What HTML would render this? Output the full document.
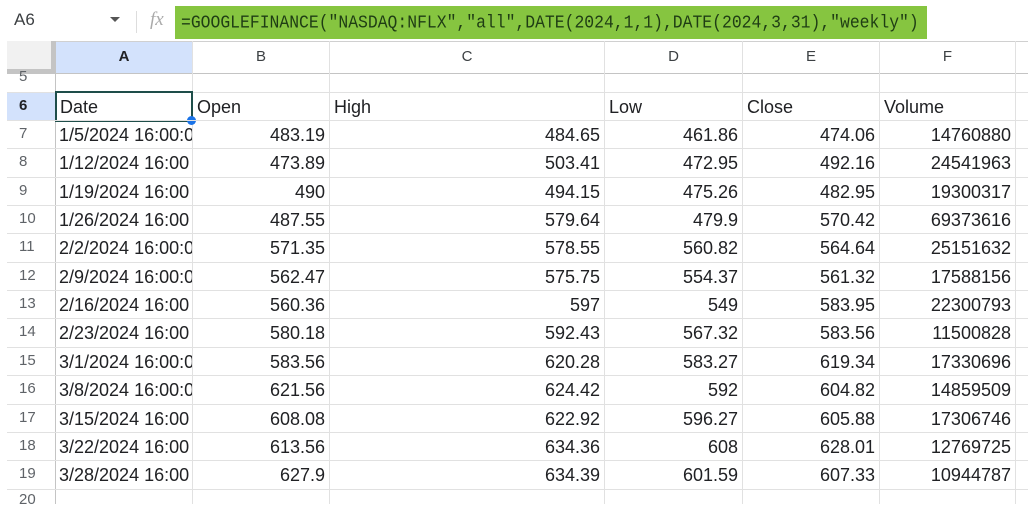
<!DOCTYPE html>
<html><head><meta charset="utf-8"><style>
body{margin:0;width:1028px;height:504px;overflow:hidden;background:#fff;font-family:"Liberation Sans",Arial,sans-serif;position:relative}
.a{position:absolute}
.hl{position:absolute;height:1px;background:#e1e1e1}
.vl{position:absolute;width:1px;background:#e1e1e1}
.c{position:absolute;font-size:18px;color:#202124;white-space:nowrap;overflow:hidden;line-height:28px}
.r{text-align:right}
.rh{position:absolute;left:7px;width:48px;font-size:15px;color:#5f6368;line-height:28px;padding-left:12px;box-sizing:border-box}
.ch{position:absolute;top:41px;height:32px;line-height:32px;text-align:center;font-size:15px;color:#3c4043}
</style></head><body>
<div class="a" style="left:14px;top:10px;font-size:17px;color:#3c4043">A6</div>
<div class="a" style="left:110px;top:17px;width:0;height:0;border-left:5px solid transparent;border-right:5px solid transparent;border-top:5px solid #555"></div>
<div class="a" style="left:136px;top:11px;width:1px;height:22px;background:#ddd"></div>
<div class="a" style="left:150px;top:9px;font-family:'Liberation Serif',serif;font-style:italic;font-size:19px;color:#aaa">fx</div>
<div class="a" style="left:175px;top:6px;width:752px;height:33px;background:#86c540"></div>
<div class="a" style="left:181px;top:6px;line-height:33px;font-family:'Liberation Mono',monospace;font-size:16.4px;color:#1f3d14;transform:scaleY(1.12);transform-origin:0 50%">=GOOGLEFINANCE("NASDAQ:NFLX","all",DATE(2024,1,1),DATE(2024,3,31),"weekly")</div>
<div class="a" style="left:7px;top:41px;width:1021px;height:1px;background:#d0d0d0"></div>
<div class="a" style="left:7px;top:41px;width:48px;height:32px;background:#f1f1f1;border-right:4px solid #c4c4c4;border-bottom:4px solid #c4c4c4;box-sizing:border-box"></div>
<div class="a" style="left:56px;top:42px;width:136px;height:31px;background:#d3e2fc"></div>
<div class="ch" style="left:56px;width:136px;font-weight:bold;color:#202124">A</div>
<div class="ch" style="left:193px;width:136px">B</div>
<div class="ch" style="left:330px;width:274px">C</div>
<div class="ch" style="left:605px;width:137px">D</div>
<div class="ch" style="left:743px;width:136px">E</div>
<div class="ch" style="left:880px;width:135px">F</div>
<div class="a" style="left:7px;top:73px;width:1021px;height:1px;background:#c4c4c4"></div>
<div class="a" style="left:7px;top:92px;width:48px;height:28px;background:#d3e2fc"></div>
<div class="vl" style="left:55px;top:41px;height:463px;background:#c4c4c4"></div>
<div class="vl" style="left:192px;top:41px;height:463px"></div>
<div class="vl" style="left:329px;top:41px;height:463px"></div>
<div class="vl" style="left:604px;top:41px;height:463px"></div>
<div class="vl" style="left:742px;top:41px;height:463px"></div>
<div class="vl" style="left:879px;top:41px;height:463px"></div>
<div class="vl" style="left:1015px;top:41px;height:463px"></div>
<div class="rh" style="top:70px;line-height:14px;height:16px;overflow:hidden">5</div>
<div class="hl" style="left:7px;top:92px;width:1021px"></div>
<div class="rh" style="top:92px;font-weight:bold;color:#202124">6</div>
<div class="c" style="left:60px;top:93px">Date</div>
<div class="c" style="left:197px;top:93px">Open</div>
<div class="c" style="left:334px;top:93px">High</div>
<div class="c" style="left:609px;top:93px">Low</div>
<div class="c" style="left:747px;top:93px">Close</div>
<div class="c" style="left:884px;top:93px">Volume</div>
<div class="a" style="left:55px;top:91px;width:134px;height:27px;border:2px solid #1e4e4a"></div>
<div class="a" style="left:187px;top:116px;width:9px;height:9px;border-radius:50%;background:#1a73e8"></div>
<div id="rows"></div>
<script>
var d=[["1/5/2024 16:00:00","483.19","484.65","461.86","474.06","14760880"],
["1/12/2024 16:00","473.89","503.41","472.95","492.16","24541963"],
["1/19/2024 16:00","490","494.15","475.26","482.95","19300317"],
["1/26/2024 16:00","487.55","579.64","479.9","570.42","69373616"],
["2/2/2024 16:00:00","571.35","578.55","560.82","564.64","25151632"],
["2/9/2024 16:00:00","562.47","575.75","554.37","561.32","17588156"],
["2/16/2024 16:00","560.36","597","549","583.95","22300793"],
["2/23/2024 16:00","580.18","592.43","567.32","583.56","11500828"],
["3/1/2024 16:00:00","583.56","620.28","583.27","619.34","17330696"],
["3/8/2024 16:00:00","621.56","624.42","592","604.82","14859509"],
["3/15/2024 16:00","608.08","622.92","596.27","605.88","17306746"],
["3/22/2024 16:00","613.56","634.36","608","628.01","12769725"],
["3/28/2024 16:00","627.9","634.39","601.59","607.33","10944787"]];
var cols=[[192,329],[329,604],[604,742],[742,879],[879,1015]];
var h="";
for(var i=0;i<d.length;i++){var t=Math.round(120+i*28.35);
h+='<div class="hl" style="left:7px;top:'+t+'px;width:1021px"></div>';
h+='<div class="rh" style="top:'+t+'px">'+(7+i)+'</div>';
h+='<div class="c" style="left:59px;width:133px;top:'+(t+1)+'px">'+d[i][0]+'</div>';
for(var j=0;j<5;j++){h+='<div class="c r" style="left:'+cols[j][0]+'px;width:'+(cols[j][1]-cols[j][0]-4)+'px;top:'+(t+1)+'px">'+d[i][j+1]+'</div>';}
}
var t=Math.round(120+13*28.35);
h+='<div class="hl" style="left:7px;top:'+t+'px;width:1021px"></div><div class="rh" style="top:'+(t+4)+'px;line-height:14px">20</div>';
document.getElementById("rows").innerHTML=h;
</script>
</body></html>
